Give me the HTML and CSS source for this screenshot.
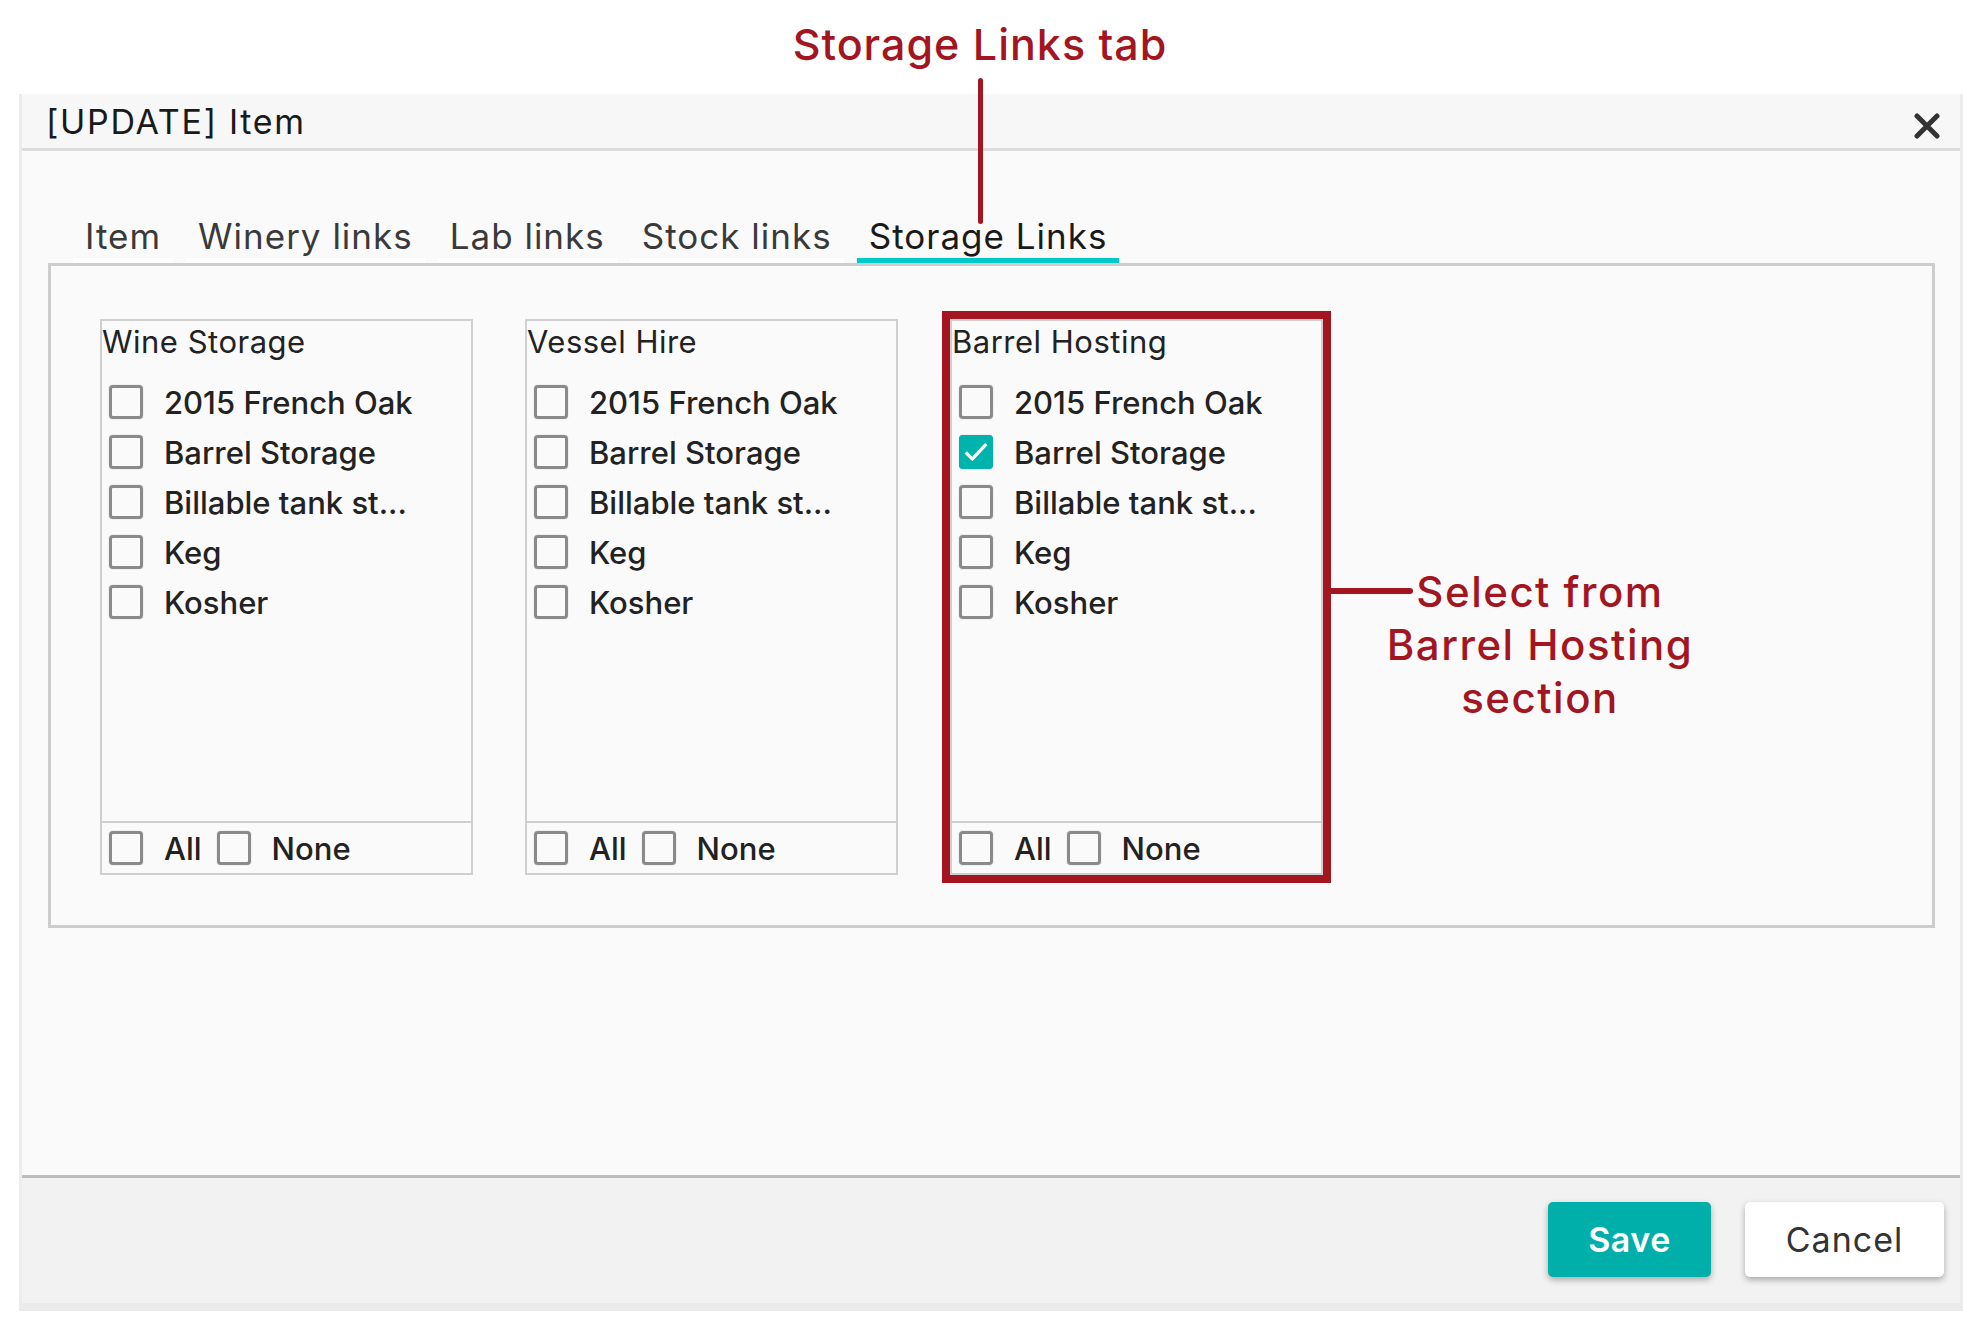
FILE: index.html
```html
<!DOCTYPE html>
<html lang="en">
<head>
  <meta charset="UTF-8">
  <title>[UPDATE] Item</title>
  <link rel="stylesheet" href="styles.css">
</head>
<body>
  <!-- callout above the dialog -->
  <div class="callout-top">Storage Links tab</div>

  <div class="dialog">
    <div class="dialog-header">
      <h1>[UPDATE] Item</h1>
      <button class="close" aria-label="Close">
        <svg width="26" height="26" viewBox="0 0 26 26"><path d="M3 3L23 23M23 3L3 23" stroke="#333" stroke-width="5" stroke-linecap="round"/></svg>
      </button>
    </div>

    <div class="dialog-body">
      <ul class="tabs">
        <li>Item</li>
        <li>Winery links</li>
        <li>Lab links</li>
        <li>Stock links</li>
        <li class="active">Storage Links</li>
      </ul>

      <div class="tab-panel">
        <div class="link-box">
          <div class="link-box-title">Wine Storage</div>
          <ul class="link-list">
            <li><span class="check"></span>2015 French Oak</li>
            <li><span class="check"></span>Barrel Storage</li>
            <li><span class="check"></span>Billable tank st...</li>
            <li><span class="check"></span>Keg</li>
            <li><span class="check"></span>Kosher</li>
          </ul>
          <div class="link-box-footer">
            <span class="check"></span><span class="opt">All</span>
            <span class="check"></span><span class="opt">None</span>
          </div>
        </div>

        <div class="link-box">
          <div class="link-box-title">Vessel Hire</div>
          <ul class="link-list">
            <li><span class="check"></span>2015 French Oak</li>
            <li><span class="check"></span>Barrel Storage</li>
            <li><span class="check"></span>Billable tank st...</li>
            <li><span class="check"></span>Keg</li>
            <li><span class="check"></span>Kosher</li>
          </ul>
          <div class="link-box-footer">
            <span class="check"></span><span class="opt">All</span>
            <span class="check"></span><span class="opt">None</span>
          </div>
        </div>

        <div class="link-box highlighted">
          <div class="link-box-title">Barrel Hosting</div>
          <ul class="link-list">
            <li><span class="check"></span>2015 French Oak</li>
            <li><span class="check checked"><svg width="30" height="30" viewBox="0 0 30 30"><path d="M4 15.5L11 22.5L26 6.5" fill="none" stroke="#fff" stroke-width="3.5"/></svg></span>Barrel Storage</li>
            <li><span class="check"></span>Billable tank st...</li>
            <li><span class="check"></span>Keg</li>
            <li><span class="check"></span>Kosher</li>
          </ul>
          <div class="link-box-footer">
            <span class="check"></span><span class="opt">All</span>
            <span class="check"></span><span class="opt">None</span>
          </div>
        </div>
      </div>
    </div>

    <div class="dialog-footer">
      <button class="btn btn-save">Save</button>
      <button class="btn btn-cancel">Cancel</button>
    </div>
  </div>

  <!-- annotation pointers -->
  <div class="pointer-v"></div>
  <div class="pointer-h"></div>
  <div class="callout-side">Select from<br>Barrel Hosting<br>section</div>
</body>
</html>
```

FILE: styles.css
```css
/* page */
body {
  margin: 0;
  background: #fff;
  font-family: Inter, "Noto Sans", sans-serif;
  color: #222;
  width: 1963px;
  height: 1334px;
  overflow: hidden;
  position: relative;
}

/* callouts */
.callout-top {
  width: 1960px;
  height: 94px;
  line-height: 88px;
  text-align: center;
  color: #a31621;
  font-size: 43px;
  font-weight: 500;
  letter-spacing: 1px;
}

.pointer-v {
  position: absolute;
  left: 978px;
  top: 78px;
  width: 5px;
  height: 146px;
  border-radius: 3px;
  background: #a31621;
}

.pointer-h {
  position: absolute;
  left: 1331px;
  top: 588px;
  width: 82px;
  height: 6px;
  border-radius: 0 3px 3px 0;
  background: #a31621;
}

.callout-side {
  position: absolute;
  left: 1360px;
  top: 565px;
  width: 360px;
  text-align: center;
  color: #a31621;
  font-size: 42px;
  font-weight: 500;
  letter-spacing: 1.5px;
  line-height: 53px;
}

/* dialog */
.dialog {
  margin-left: 19px;
  width: 1938px;
  border-left: 3px solid #ececec;
  border-right: 6px solid #ececec;
  border-bottom: 8px solid #ebebeb;
  background: #fafafa;
}

.dialog-header {
  height: 54px;
  display: flex;
  align-items: center;
  justify-content: space-between;
  padding: 0 20px 0 24px;
  background: #f7f7f7;
  border-bottom: 3px solid #dcdcdc;
}

.dialog-header h1 {
  margin: 0;
  font-size: 34px;
  font-weight: 400;
  letter-spacing: 1.7px;
  color: #1a1a1a;
}

.close {
  border: 0;
  background: none;
  padding: 0;
  margin-top: 10px;
  width: 26px;
  height: 26px;
}

.dialog-body {
  padding: 63px 25px 247px 26px;
}

/* tabs */
.tabs {
  list-style: none;
  margin: 0;
  padding: 0 0 0 25px;
  display: flex;
  gap: 13px;
}

.tabs li {
  padding: 0 12px;
  line-height: 44px;
  font-size: 35px;
  letter-spacing: 1px;
  color: #3a3a3a;
  border-bottom: 5px solid #fff;
}

.tabs li.active {
  color: #1a1a1a;
  border-bottom-color: #00c9c9;
}

.tab-panel {
  border: 3px solid #cdcdcd;
  padding: 53px 49px 50px;
  display: flex;
  gap: 52px;
}

/* link boxes */
.link-box {
  width: 369px;
  height: 552px;
  border: 2px solid #cfcfcf;
  display: flex;
  flex-direction: column;
}

.link-box.highlighted {
  outline: 8px solid #a31621;
}

.link-box-title {
  height: 56px;
  line-height: 42px;
  font-size: 31px;
  letter-spacing: 0.5px;
  color: #222;
}

.link-list {
  list-style: none;
  margin: 0;
  padding: 0 0 0 7px;
  flex: 1;
}

.link-list li {
  height: 50px;
  display: flex;
  align-items: center;
  gap: 21px;
  font-size: 31px;
  font-weight: 500;
  color: #222;
}

.check {
  box-sizing: border-box;
  width: 34px;
  height: 34px;
  flex: none;
  border: 3px solid #8a8a8a;
  border-radius: 4px;
  box-shadow: 0 0 1px #999;
  display: inline-flex;
  align-items: center;
  justify-content: center;
}

.check.checked {
  background: #00b3ad;
  border-color: #00b3ad;
}

.link-box-footer {
  height: 50px;
  border-top: 2px solid #cfcfcf;
  display: flex;
  align-items: center;
  padding-left: 7px;
  font-size: 31px;
  font-weight: 500;
}

.link-box-footer .opt {
  margin: 0 15px 0 21px;
}

/* footer */
.dialog-footer {
  border-top: 3px solid #bdbdbd;
  background: #f2f2f2;
  height: 125px;
  display: flex;
  justify-content: flex-end;
  align-items: flex-start;
  gap: 34px;
  padding-right: 16px;
}

.btn {
  margin-top: 24px;
  height: 75px;
  border: 0;
  border-radius: 5px;
  font-family: Inter, "Noto Sans", sans-serif;
  font-size: 34px;
  box-shadow: 0 3px 6px rgba(0, 0, 0, 0.3);
}

.btn-save {
  width: 163px;
  background: #00aeaa;
  color: #fff;
  font-weight: 600;
  letter-spacing: 0.5px;
}

.btn-cancel {
  width: 199px;
  background: #fff;
  color: #333;
  letter-spacing: 1px;
}
```
